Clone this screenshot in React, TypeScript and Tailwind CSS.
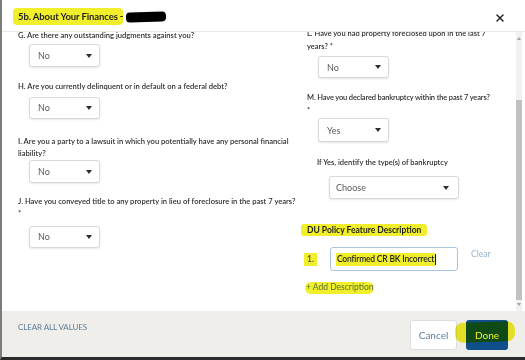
import React from "react";
import { X } from "lucide-react";

const HL = "bg-[#f1ef2c]";

function Select({
  value,
  className = "",
  w = "w-[71px]",
  h = "h-[23px]",
  pl = "pl-[8px]",
  pr = "pr-[7px]",
}: {
  value: string;
  className?: string;
  w?: string;
  h?: string;
  pl?: string;
  pr?: string;
}) {
  return (
    <div
      className={`${h} ${w} ${pl} ${pr} bg-white border border-[#d9d9d9] rounded-[3px] shadow-[0_1px_2px_rgba(0,0,0,0.10)] flex items-center justify-between shrink-0 ${className}`}
    >
      <span className="text-[9px] font-normal text-[#5a5a5a]">{value}</span>
      <span className="w-0 h-0 border-l-[3.5px] border-r-[3.5px] border-t-[4px] border-l-transparent border-r-transparent border-t-[#2e2e2e]" />
    </div>
  );
}

export default function App() {
  return (
    <div className="w-[525px] h-[360px] bg-white flex flex-col overflow-hidden border-l-[2px] border-l-[#7c7c7c] border-b-[3px] border-b-[#2b2b2b] font-['Lato',_sans-serif]">
      {/* Header */}
      <div className="h-[32px] shrink-0 border-b border-[#e8e8e8] flex items-center justify-between pl-[11px] pr-[19px]">
        <div className="flex items-center translate-y-[1px]">
          <span className={`${HL} px-[5px] py-[3px] rounded-[4px] text-[9.5px] leading-[11px] font-bold text-[#1f1f1f] tracking-[-0.1px]`}>
            5b. About Your Finances
          </span>
          <span className="text-[9.5px] font-bold text-[#1f1f1f] -ml-[3px]">-</span>
          <span className="ml-[3px] w-[40px] h-[10px] bg-black rounded-[4px] -rotate-2" />
        </div>
        <X size={12} strokeWidth={3} className="text-[#222] translate-y-[2px]" />
      </div>

      {/* Body */}
      <div className="flex-1 flex overflow-hidden">
        <div className="flex-1 flex pl-[16px] overflow-hidden">
          {/* Left column */}
          <div className="w-[288px] shrink-0 flex flex-col text-[7.6px] leading-[12px] font-semibold text-[#2e2e2e] whitespace-nowrap">
            <p className="-mt-[3px]">G. Are there any outstanding judgments against you?</p>
            <Select value="No" className="mt-[3px] ml-[11px]" />
            <p className="mt-[13px]">H. Are you currently delinquent or in default on a federal debt?</p>
            <Select value="No" className="mt-[5px] ml-[11px]" h="h-[22px]" />
            <p className="mt-[16px]">
              I. Are you a party to a lawsuit in which you potentially have any personal financial
              <br />
              liability?
            </p>
            <Select value="No" className="mt-[1px] ml-[11px]" />
            <p className="mt-[12px]">
              J. Have you conveyed title to any property in lieu of foreclosure in the past 7 years?
              <br />*
            </p>
            <Select value="No" className="mt-[7px] ml-[11px]" h="h-[22px]" />
          </div>

          {/* Right column */}
          <div className="flex-1 flex flex-col text-[7.5px] leading-[13px] font-semibold text-[#2e2e2e] whitespace-nowrap">
            <p className="-mt-[5px] ml-[1px]">
              L. Have you had property foreclosed upon in the last 7
              <br />
              years? *
            </p>
            <Select value="No" className="mt-[3px] ml-[12px]" h="h-[22px]" />
            <p className="mt-[13px] ml-[1px] tracking-[-0.15px]">
              M. Have you declared bankruptcy within the past 7 years?
              <br />*
            </p>
            <Select value="Yes" className="mt-[1px] ml-[12px]" h="h-[24px]" />
            <p className="mt-[14px] ml-[11px]">If Yes, identify the type(s) of bankruptcy</p>
            <Select
              value="Choose"
              className="mt-[7px] ml-[23px]"
              w="w-[130px]"
              pl="pl-[6px]"
              pr="pr-[9px]"
            />
            <div className="mt-[25px] -ml-[5px]">
              <span className={`${HL} px-[6px] py-[1px] rounded-[3px] text-[8.5px] font-bold text-[#1e1e1e]`}>
                DU Policy Feature Description
              </span>
            </div>
            <div className="mt-[10px] flex items-start">
              <div className="w-[24px] h-[24px] flex items-center">
                <span className={`${HL} -ml-[2px] px-[3px] leading-[13px] text-[8.5px] font-semibold text-[#4a4a30]`}>
                  1.
                </span>
              </div>
              <div className="w-[128px] h-[24px] border border-[#a9c5dd] rounded-[3px] flex items-center pl-[5px]">
                <span className={`${HL} px-[1px] leading-[13px] text-[8.5px] font-semibold text-[#222] tracking-[-0.2px]`}>
                  Confirmed CR BK Incorrect
                </span>
                <span className="w-px h-[11px] bg-[#111]" />
              </div>
              <span className="ml-[13px] mt-[1px] text-[8.5px] leading-[12px] font-normal text-[#95b4cf]">
                Clear
              </span>
            </div>
            <div className="mt-[10px] -ml-[1px]">
              <span className={`${HL} px-[1px] pb-[2px] rounded-[6px] text-[8.5px] leading-[13px] font-normal text-[#566f35]`}>
                + Add Description
              </span>
            </div>
          </div>
        </div>

        {/* Scrollbar */}
        <div className="w-[6px] shrink-0 bg-[#f1f1f1] flex flex-col items-center">
          <span className="mt-[5px] w-0 h-0 border-l-[2px] border-r-[2px] border-b-[3px] border-l-transparent border-r-transparent border-b-[#a3a3a3]" />
          <div className="mt-[60px] w-[6px] h-[200px] bg-[#c1c1c1]" />
          <span className="mt-[3px] w-0 h-0 border-l-[2px] border-r-[2px] border-t-[3px] border-l-transparent border-r-transparent border-t-[#a3a3a3]" />
        </div>
        <div className="w-[3px] shrink-0 bg-white" />
      </div>

      {/* Footer */}
      <div className="h-[46px] shrink-0 bg-[#efeeeb] flex justify-between pl-[16px] pr-[17px]">
        <span className="mt-[10px] text-[8px] leading-[12px] font-normal text-[#5d7d95] tracking-[-0.1px]">
          CLEAR ALL VALUES
        </span>
        <div className="mt-[9px] flex gap-[9px] h-[30px]">
          <button className="w-[47px] h-[30px] bg-white border border-[#dedede] rounded-[3px] text-[10px] text-[#5b7e9d]">
            Cancel
          </button>
          <div className="relative">
            <button className="w-[42px] h-[30px] bg-[#0f4f8c] rounded-[3px] text-[10px] text-white">
              Done
            </button>
            <span className="absolute left-[-11px] top-[2px] w-[60px] h-[20px] bg-[#f0ef2a] mix-blend-multiply rounded-[8px] -rotate-2" />
          </div>
        </div>
      </div>
    </div>
  );
}
